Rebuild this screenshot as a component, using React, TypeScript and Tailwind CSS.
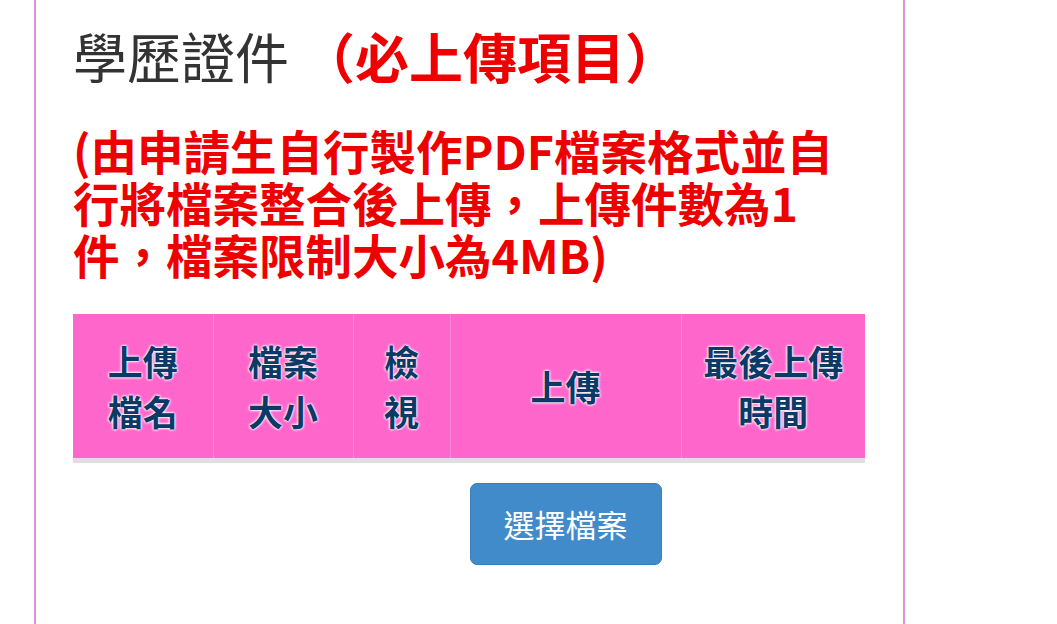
import React from "react";

const heads = [
  { label: ["上傳", "檔名"], w: "w-[140px]" },
  { label: ["檔案", "大小"], w: "w-[140px]" },
  { label: ["檢", "視"], w: "w-[97px]" },
  { label: ["上傳"], w: "w-[231px]" },
  { label: ["最後上傳", "時間"], w: "w-[184px]" },
];

export default function App() {
  return (
    <div className="min-h-[624px] bg-white font-['Noto_Sans_CJK_TC','Noto_Sans',sans-serif] overflow-hidden">
      <div className="ml-[34px] w-[871px] min-h-[624px] border-x-2 border-[#dc94dc] pl-[37px] pt-[21px]">
        <h2 className="text-[54px] leading-[70px] text-[#333]">
          學歷證件 <span className="font-bold text-[#ee0000]">（必上傳項目）</span>
        </h2>
        <p className="mt-[33px] w-[770px] text-[46.5px] leading-[52px] font-bold text-[#ee0000]">
          (由申請生自行製作PDF檔案格式並自行將檔案整合後上傳，上傳件數為1件，檔案限制大小為4MB)
        </p>
        <table className="mt-[34px] border-collapse">
          <thead>
            <tr className="bg-[#ff66cc] border-b-[5px] border-[#e2dde0]">
              {heads.map((h, i) => (
                <th
                  key={i}
                  className={`${h.w} h-[146px] p-0 align-middle text-center font-bold text-[35px] leading-[50px] text-[#0c3a66] [text-shadow:0_0_3px_#fff,0_0_3px_#fff,0_0_2px_#fff] ${i > 0 ? "border-l border-[#f98ad6]" : ""}`}
                >
                  {h.label.map((l, j) => (
                    <div key={j}>{l}</div>
                  ))}
                </th>
              ))}
            </tr>
          </thead>
          <tbody>
            <tr>
              <td className="p-0" />
              <td className="p-0" />
              <td className="p-0" />
              <td className="pt-[20px] text-center align-top">
                <button className="w-[192px] h-[82px] rounded-[7px] bg-[#428bca] border border-[#3a7fbd] text-white text-[31px] leading-none">
                  選擇檔案
                </button>
              </td>
              <td className="p-0" />
            </tr>
          </tbody>
        </table>
      </div>
    </div>
  );
}
